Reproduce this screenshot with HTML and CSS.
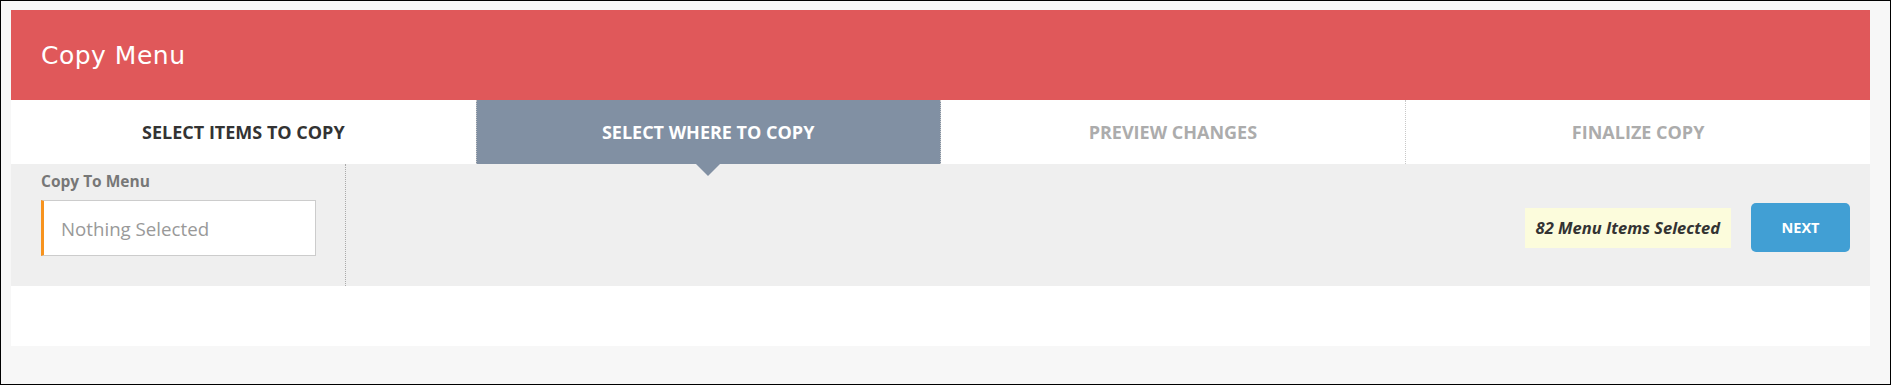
FILE: index.html
```html
<!DOCTYPE html>
<html lang="en">
<head>
    <meta charset="UTF-8">
    <meta name="viewport" content="width=device-width, initial-scale=1.0">
    <title>Copy Menu</title>
    <link rel="stylesheet" href="styles.css">
</head>
<body>
    <div class="frame">
        <div class="card">
            <!-- header -->
            <div class="card-header">Copy Menu</div>

            <!-- steps -->
            <div class="steps">
                <div class="step done">SELECT ITEMS TO COPY</div>
                <div class="step active">SELECT WHERE TO COPY</div>
                <div class="step">PREVIEW CHANGES</div>
                <div class="step last">FINALIZE COPY</div>
            </div>

            <!-- step body -->
            <div class="step-body">
                <div class="side">
                    <div class="side-label">Copy To Menu</div>
                    <div class="picker">Nothing Selected</div>
                </div>
                <div class="actions">
                    <div class="count">82 Menu Items Selected</div>
                    <button class="btn-next">NEXT</button>
                </div>
            </div>

            <div class="card-foot"></div>
        </div>
    </div>
</body>
</html>
```

FILE: styles.css
```css
* {
    box-sizing: border-box;
}
body {
    margin: 0;
    font-family: "Open Sans", "Liberation Sans", sans-serif;
}
.frame {
    height: 385px;
    border: 1px solid #000;
    background-color: #f7f7f7;
    padding: 9px 20px 0 10px;
}
.card {
    background-color: #fff;
}
.card-header {
    height: 90px;
    display: flex;
    align-items: center;
    padding-left: 30px;
    background-color: #e0585a;
    color: #fff;
    font-family: "DejaVu Sans", "Open Sans", sans-serif;
    font-size: 25px;
    font-weight: 400;
    letter-spacing: 0.5px;
}
.steps {
    display: grid;
    grid-template-columns: repeat(4, 1fr);
    height: 64px;
}
.step {
    position: relative;
    display: flex;
    align-items: center;
    justify-content: center;
    font-size: 18px;
    font-weight: 700;
    color: #acacac;
}
.step.done {
    color: #333;
}
.step.last {
    border-left: 1px dotted #c8c8c8;
}
.step.active {
    background-color: #8190a3;
    color: #fff;
    border-left: 1px dotted #c8c8c8;
    border-right: 1px dotted #c8c8c8;
}
/* little arrow under the current step */
.step.active::after {
    content: "";
    position: absolute;
    left: 50%;
    top: 100%;
    margin-left: -12px;
    border-top: 12px solid #8190a3;
    border-left: 12px solid transparent;
    border-right: 12px solid transparent;
}
.step-body {
    display: flex;
    height: 122px;
    background-color: #efefef;
}
.side {
    width: 335px;
    padding: 7px 0 0 30px;
    border-right: 1px dotted #aaa;
}
.side-label {
    font-size: 15.5px;
    line-height: 21px;
    font-weight: 700;
    color: #777;
    margin-bottom: 8px;
}
.picker {
    width: 275px;
    height: 56px;
    display: flex;
    align-items: center;
    padding-left: 17px;
    background-color: #fff;
    border: 1px solid #ccc;
    border-left: 3px solid #f7931e;
    font-size: 18.7px;
    color: #999;
}
.actions {
    flex: 1;
    display: flex;
    justify-content: flex-end;
    align-items: center;
    gap: 20px;
    padding: 5px 20px 0 0;
}
.count {
    height: 40px;
    display: flex;
    align-items: center;
    padding: 0 11px;
    background-color: #fcfcdc;
    color: #333;
    font-size: 16.5px;
    font-weight: 700;
    font-style: italic;
}
.btn-next {
    width: 99px;
    height: 49px;
    border: none;
    border-radius: 5px;
    background-color: #419fd4;
    color: #fff;
    font-family: inherit;
    font-size: 14.5px;
    font-weight: 700;
    outline: none;
}
.card-foot {
    height: 60px;
}
```
